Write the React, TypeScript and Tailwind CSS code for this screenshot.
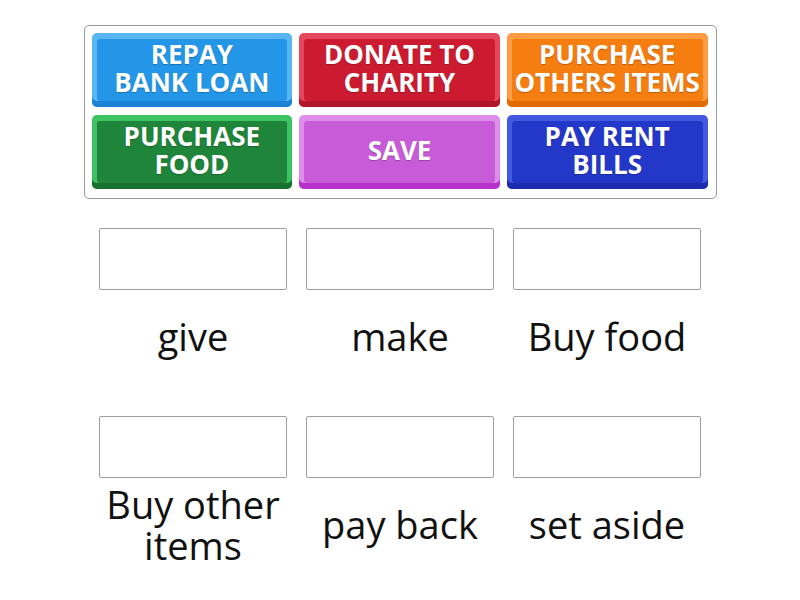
const tiles = [
  { text: ["REPAY", "BANK LOAN"], light: "bg-[#5ab6f3]", inner: "bg-[#2396e8]", dark: "shadow-[inset_0_-6px_0_#1b82d6]" },
  { text: ["DONATE TO", "CHARITY"], light: "bg-[#e5485c]", inner: "bg-[#cc1b31]", dark: "shadow-[inset_0_-6px_0_#b01529]" },
  { text: ["PURCHASE", "OTHERS ITEMS"], light: "bg-[#fc9d44]", inner: "bg-[#f67d0f]", dark: "shadow-[inset_0_-6px_0_#e26a02]" },
  { text: ["PURCHASE", "FOOD"], light: "bg-[#3cc463]", inner: "bg-[#1f853a]", dark: "shadow-[inset_0_-6px_0_#17722f]" },
  { text: ["SAVE"], light: "bg-[#de8ee8]", inner: "bg-[#c85cd8]", dark: "shadow-[inset_0_-6px_0_#b731cb]" },
  { text: ["PAY RENT", "BILLS"], light: "bg-[#4459e2]", inner: "bg-[#2337c9]", dark: "shadow-[inset_0_-6px_0_#1c2bb0]" },
];

const targets = [
  ["give"],
  ["make"],
  ["Buy food"],
  ["Buy other", "items"],
  ["pay back"],
  ["set aside"],
];

function Tile({ t }: { t: (typeof tiles)[number] }) {
  return (
    <div className={`h-[74px] rounded-[5px] px-[5px] pt-[6px] pb-[6px] ${t.light} ${t.dark}`}>
      <div
        className={`h-full rounded-[3px] ${t.inner} flex flex-col items-center justify-center pb-[5px] text-white font-bold text-[26px] leading-[28px] [text-shadow:0_1px_1px_rgba(0,0,0,0.25)] whitespace-nowrap`}
      >
        {t.text.map((line) => (
          <span key={line}>{line}</span>
        ))}
      </div>
    </div>
  );
}

export default function App() {
  return (
    <div
      className="w-[800px] h-[600px] bg-white flex flex-col items-center pt-[25px]"
      style={{ fontFamily: '"Open Sans", "Noto Sans", sans-serif' }}
    >
      <div className="w-[633px] border border-[#9a9a9a] rounded-[5px] pt-[7px] pb-[9px] pl-[7px] pr-[8px] grid grid-cols-3 gap-x-[7px] gap-y-[8px]">
        {tiles.map((t, i) => (
          <Tile key={i} t={t} />
        ))}
      </div>

      <div className="mt-[29px] grid grid-cols-[188px_188px_188px] gap-x-[19px] gap-y-[33px]">
        {targets.map((lines, i) => (
          <div key={i} className="flex flex-col">
            <div className="h-[62px] border border-[#9e9e9e] rounded-[2px] bg-white" />
            <div className="h-[93px] flex flex-col items-center justify-center text-[38px] leading-[41px] text-[#111] text-center">
              {lines.map((l) => (
                <span key={l} className="whitespace-nowrap">
                  {l}
                </span>
              ))}
            </div>
          </div>
        ))}
      </div>
    </div>
  );
}
